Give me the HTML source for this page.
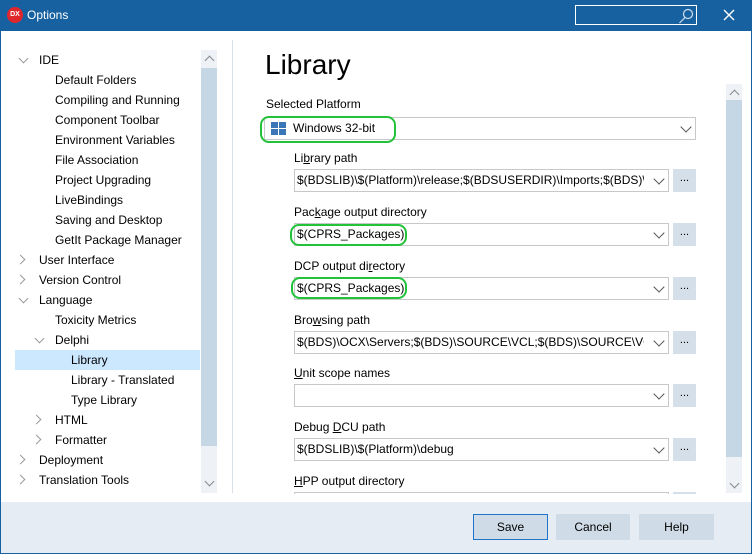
<!DOCTYPE html>
<html><head><meta charset="utf-8"><style>
*{margin:0;padding:0;box-sizing:border-box}
body{width:752px;height:554px;overflow:hidden;font-family:"Liberation Sans",sans-serif;font-size:12px;color:#000;background:#fff;position:relative}
.a{position:absolute;white-space:nowrap}
.tb{left:0;top:0;width:752px;height:31px;background:#1761a1}
.frame{left:0;top:31px;width:752px;height:523px;border:1px solid #1761a1;border-top:none}
.bottom{left:1px;top:502px;width:750px;height:51px;background:#e6ecf3}
.t{position:absolute;white-space:nowrap;line-height:16px}
.chev{position:absolute;width:7px;height:7px;border-right:1px solid #999;border-bottom:1px solid #999}
.sel{left:15px;top:350px;width:185px;height:20px;background:#cce8ff}
.lbl{position:absolute;white-space:nowrap}
.cb{position:absolute;height:23px;border:1px solid #c8c8c8;background:#fff;line-height:21px}
.cb .tx{position:absolute;left:2px;top:0;right:24px;overflow:hidden;white-space:nowrap}
.cb .dd{position:absolute;right:5px;top:5px;width:8px;height:8px;border-right:1px solid #555;border-bottom:1px solid #555;transform:rotate(45deg)}
.dots{position:absolute;width:23px;height:23px;background:#d5dfe9;text-align:center;line-height:18px;font-size:11px}
.btn{position:absolute;top:514px;height:26px;background:#cfdbe6;text-align:center;line-height:26px;font-size:12px}
.ring{position:absolute;border:2px solid #22c23a;border-radius:9px}
u{text-decoration:underline}
</style></head><body>
<div class="a tb"></div>
<div class="a" style="left:7px;top:7px;width:16px;height:16px;border-radius:50%;background:#e0262d;color:#fff;font-size:7px;font-weight:bold;line-height:16px;text-align:center">DX</div>
<div class="a" style="left:27px;top:8px;color:#fff;font-size:12px">Options</div>
<div class="a" style="left:575px;top:5px;width:122px;height:20px;border:1px solid #fff"></div>
<svg class="a" style="left:678px;top:8px" width="16" height="16"><circle cx="10" cy="6" r="4.5" fill="none" stroke="#cfe0f0" stroke-width="1.2"/><line x1="7" y1="9.5" x2="1.5" y2="15" stroke="#cfe0f0" stroke-width="1.2"/></svg>
<svg class="a" style="left:723px;top:9px" width="12" height="12"><path d="M1 1L11 11M11 1L1 11" stroke="#fff" stroke-width="1.4"/></svg>
<div class="a frame"></div>
<div class="a bottom"></div>

<div class="a sel"></div>
<div class="chev" style="left:20px;top:55px;transform:rotate(45deg)"></div>
<div class="t" style="left:39px;top:52px">IDE</div>
<div class="t" style="left:55px;top:72px">Default Folders</div>
<div class="t" style="left:55px;top:92px">Compiling and Running</div>
<div class="t" style="left:55px;top:112px">Component Toolbar</div>
<div class="t" style="left:55px;top:132px">Environment Variables</div>
<div class="t" style="left:55px;top:152px">File Association</div>
<div class="t" style="left:55px;top:172px">Project Upgrading</div>
<div class="t" style="left:55px;top:192px">LiveBindings</div>
<div class="t" style="left:55px;top:212px">Saving and Desktop</div>
<div class="t" style="left:55px;top:232px">GetIt Package Manager</div>
<div class="chev" style="left:17px;top:256px;transform:rotate(-45deg)"></div>
<div class="t" style="left:39px;top:252px">User Interface</div>
<div class="chev" style="left:17px;top:276px;transform:rotate(-45deg)"></div>
<div class="t" style="left:39px;top:272px">Version Control</div>
<div class="chev" style="left:20px;top:295px;transform:rotate(45deg)"></div>
<div class="t" style="left:39px;top:292px">Language</div>
<div class="t" style="left:55px;top:312px">Toxicity Metrics</div>
<div class="chev" style="left:36px;top:335px;transform:rotate(45deg)"></div>
<div class="t" style="left:55px;top:332px">Delphi</div>
<div class="t" style="left:71px;top:352px">Library</div>
<div class="t" style="left:71px;top:372px">Library - Translated</div>
<div class="t" style="left:71px;top:392px">Type Library</div>
<div class="chev" style="left:33px;top:416px;transform:rotate(-45deg)"></div>
<div class="t" style="left:55px;top:412px">HTML</div>
<div class="chev" style="left:33px;top:436px;transform:rotate(-45deg)"></div>
<div class="t" style="left:55px;top:432px">Formatter</div>
<div class="chev" style="left:17px;top:456px;transform:rotate(-45deg)"></div>
<div class="t" style="left:39px;top:452px">Deployment</div>
<div class="chev" style="left:17px;top:476px;transform:rotate(-45deg)"></div>
<div class="t" style="left:39px;top:472px">Translation Tools</div>
<div class="a" style="left:201px;top:50px;width:16px;height:443px;background:#eef2f6"></div>
<div class="a" style="left:201px;top:68px;width:16px;height:378px;background:#c5d6e5"></div>
<div class="chev" style="left:206px;top:57px;transform:rotate(-135deg);border-color:#888"></div>
<div class="chev" style="left:206px;top:478px;transform:rotate(45deg);border-color:#888"></div>
<div class="a" style="left:232px;top:40px;width:1px;height:453px;background:#d8dfe6"></div>

<div class="a" style="left:265px;top:49px;font-size:28px">Library</div>
<div class="lbl" style="left:266px;top:97px">Selected Platform</div>
<div class="cb" style="left:264px;top:117px;width:432px"><span class="tx" style="left:28px">Windows 32-bit</span><span class="dd"></span></div>
<svg class="a" style="left:271px;top:122px" width="16" height="14"><rect x="0" y="0" width="7" height="6" fill="#3b77b6"/><rect x="8" y="0" width="7" height="6" fill="#3b77b6"/><rect x="0" y="7" width="7" height="6" fill="#3b77b6"/><rect x="8" y="7" width="7" height="6" fill="#3b77b6"/></svg>
<div class="ring" style="left:260px;top:116px;width:136px;height:27px"></div>

<div class="lbl" style="left:294px;top:151px">Li<u>b</u>rary path</div>
<div class="cb" style="left:294px;top:169px;width:375px"><span class="tx">$(BDSLIB)\$(Platform)\release;$(BDSUSERDIR)\Imports;$(BDS)\Imports</span><span class="dd"></span></div>
<div class="dots" style="left:673px;top:169px">...</div>

<div class="lbl" style="left:294px;top:205px">Pac<u>k</u>age output directory</div>
<div class="cb" style="left:294px;top:223px;width:375px"><span class="tx">$(CPRS_Packages)</span><span class="dd"></span></div>
<div class="dots" style="left:673px;top:223px">...</div>
<div class="ring" style="left:290px;top:224px;width:117px;height:22px"></div>

<div class="lbl" style="left:294px;top:259px">DCP output di<u>r</u>ectory</div>
<div class="cb" style="left:294px;top:277px;width:375px"><span class="tx">$(CPRS_Packages)</span><span class="dd"></span></div>
<div class="dots" style="left:673px;top:277px">...</div>
<div class="ring" style="left:291px;top:277px;width:116px;height:22px"></div>

<div class="lbl" style="left:294px;top:313px">Bro<u>w</u>sing path</div>
<div class="cb" style="left:294px;top:331px;width:375px"><span class="tx">$(BDS)\OCX\Servers;$(BDS)\SOURCE\VCL;$(BDS)\SOURCE\VCL\Ap</span><span class="dd"></span></div>
<div class="dots" style="left:673px;top:331px">...</div>

<div class="lbl" style="left:294px;top:366px"><u>U</u>nit scope names</div>
<div class="cb" style="left:294px;top:384px;width:375px"><span class="dd"></span></div>
<div class="dots" style="left:673px;top:384px">...</div>

<div class="lbl" style="left:294px;top:420px">Debug <u>D</u>CU path</div>
<div class="cb" style="left:294px;top:438px;width:375px"><span class="tx">$(BDSLIB)\$(Platform)\debug</span><span class="dd"></span></div>
<div class="dots" style="left:673px;top:438px">...</div>

<div class="lbl" style="left:294px;top:474px"><u>H</u>PP output directory</div>
<div class="cb" style="left:294px;top:492px;width:375px;height:2px;border-bottom:none"></div>
<div class="dots" style="left:673px;top:492px;height:2px"></div>

<div class="a" style="left:726px;top:84px;width:16px;height:409px;background:#eef2f6"></div>
<div class="a" style="left:726px;top:100px;width:16px;height:357px;background:#c5d6e5"></div>
<div class="chev" style="left:731px;top:91px;transform:rotate(-135deg);border-color:#888"></div>
<div class="chev" style="left:731px;top:480px;transform:rotate(45deg);border-color:#888"></div>

<div class="btn" style="left:473px;width:75px;border:1px solid #1f73c9;line-height:24px">Save</div>
<div class="btn" style="left:556px;width:74px">Cancel</div>
<div class="btn" style="left:639px;width:75px">Help</div>
</body></html>
